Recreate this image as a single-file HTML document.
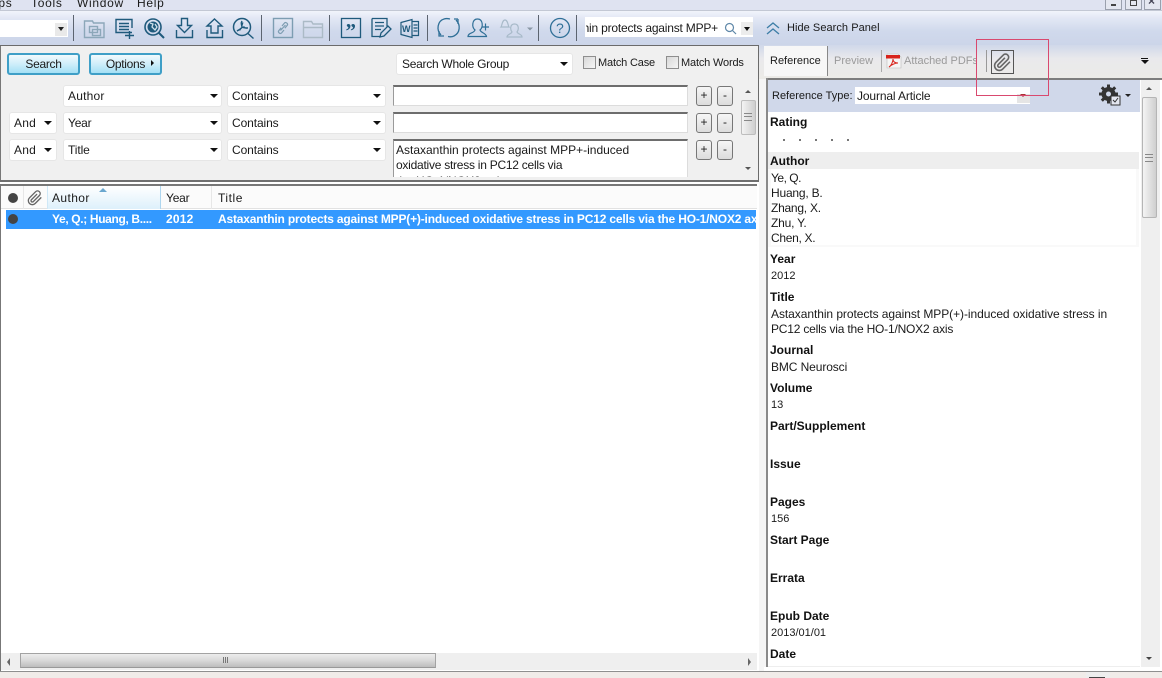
<!DOCTYPE html>
<html><head><meta charset="utf-8"><style>
html,body{margin:0;padding:0}
body{width:1162px;height:678px;position:relative;overflow:hidden;background:#fff;font-family:"Liberation Sans",sans-serif;font-size:12px;color:#1a1a1a}
.a{position:absolute}
.t{position:absolute;white-space:nowrap;line-height:15px;letter-spacing:-.2px}
.s{font-size:11px;letter-spacing:0}
.b{font-weight:bold;letter-spacing:0;color:#111}
.dd{position:absolute;height:20px;background:#fff;border-radius:2px;box-shadow:0 0 0 1px #e6e6e6}
.ar{position:absolute;width:0;height:0;border-left:4px solid transparent;border-right:4px solid transparent;border-top:4px solid #111}
.inp{position:absolute;background:#fff;border:1px solid #dcdcdc;border-top:2px solid #6d6d6d;border-left:1px solid #9a9a9a;box-sizing:border-box}
.pm{position:absolute;width:14px;height:18px;border:1px solid #777;border-radius:3px;background:linear-gradient(#f6f6f6,#dcdcdc);text-align:center;line-height:17px;font-size:12px;color:#222}
.btn{position:absolute;height:18px;top:53px;border:2px solid #3f9fc7;border-radius:3px;background:linear-gradient(#f2fafd 0%,#cfeefa 50%,#a5e0f5 100%);text-align:center;line-height:18px;letter-spacing:-.3px}
.sep{position:absolute;width:1px;background:#5c6470}
.cb{position:absolute;width:11px;height:11px;border:1px solid #8e8e8e;background:linear-gradient(135deg,#d8d8d8,#f6f6f6)}
svg{position:absolute;overflow:visible}
</style></head><body>

<!-- top chrome -->
<div class="a" style="left:0;top:0;width:1162px;height:10px;background:#dfe3f1"></div>
<div class="a" style="left:0;top:10px;width:1162px;height:1px;background:#c3c8d4"></div>
<div class="a" style="left:0;top:11px;width:1162px;height:34px;background:linear-gradient(#f1f4fb 0%,#e3e8f5 20%,#d0d9ec 60%,#ccd5e9 100%)"></div>
<div class="t" style="left:-5px;top:-4px;letter-spacing:.7px">ips</div>
<div class="t" style="left:31px;top:-4px;letter-spacing:.7px">Tools</div>
<div class="t" style="left:77px;top:-4px;letter-spacing:.7px">Window</div>
<div class="t" style="left:137px;top:-4px;letter-spacing:.7px">Help</div>
<!-- window buttons -->
<div class="a" style="left:1105px;top:-4px;width:15px;height:12px;border:1px solid #9aa0ad;background:#e4e7f0"></div>
<div class="a" style="left:1125px;top:-4px;width:15px;height:12px;border:1px solid #9aa0ad;background:#e4e7f0"></div>
<div class="a" style="left:1144px;top:-4px;width:15px;height:12px;border:1px solid #9aa0ad;background:#e4e7f0"></div>
<div class="a" style="left:1111px;top:4px;width:5px;height:2px;background:#444"></div>
<div class="a" style="left:1130px;top:0;width:5px;height:4px;border:1px solid #444"></div>
<div class="t" style="left:1148px;top:-6px;font-weight:bold;color:#445">×</div>

<!-- group combobox -->
<div class="a" style="left:0;top:20px;width:68px;height:17px;background:#fff"></div>
<div class="a" style="left:55px;top:23px;width:12px;height:13px;background:#e9e9e9"></div>
<div class="ar" style="left:58px;top:27px;border-left-width:3px;border-right-width:3px;border-top-color:#222"></div>

<div class="sep" style="left:73px;top:15px;height:26px"></div>
<div class="sep" style="left:261px;top:15px;height:26px"></div>
<div class="sep" style="left:329px;top:15px;height:26px"></div>
<div class="sep" style="left:427px;top:15px;height:26px"></div>
<div class="sep" style="left:538px;top:15px;height:26px"></div>
<div class="sep" style="left:576px;top:15px;height:26px"></div>

<svg class="a" style="left:0;top:0" width="760" height="46" viewBox="0 0 760 46" fill="none" stroke="#1f5a7c" stroke-width="1.4">
 <!-- copy to group -->
 <g stroke="#8ca7b9"><path d="M84.5 37.5V21h8l1 2h10.500v14.500z"/><rect x="89.500" y="26.500" width="8" height="6"/><rect x="92.500" y="29.500" width="8" height="6"/></g>
 <!-- new ref -->
 <path d="M132 32.500H116V19.500H132V28M119 23.500h10M119 26.500h10M119 29.500h10M125 35.500h9M129.500 31v8" />
 <!-- online search globe -->
 <circle cx="153" cy="27" r="8" stroke-width="1.6"/><circle cx="153" cy="27" r="5.500" fill="#1f5a7c" stroke="none"/><path d="M150 23l3 1-1 3 3 3 2-3-2-3" stroke="#cfe0ea" stroke-width="1.300"/><path d="M159 33l5 5" stroke-width="2"/>
 <!-- import -->
 <path d="M181.500 18.500h6v7h4l-7 7-7-7h4zM176.500 30v7.500h16V30"/>
 <!-- export -->
 <path d="M214.500 19l7.500 7h-4v7h-7v-7h-4zM207 30v7.500h15.500V30"/>
 <!-- find pdf -->
 <circle cx="242" cy="27" r="8.500" stroke-width="1.500"/><path d="M242 21c-1.500 3 0 5 0 6s-3 3-5 4M242 27c1 1 4 1 6 1M248 33.500l5.500 5" /><path d="M240.500 22.500h3l-1.500 5zM236.500 30.500l5-3-1 3zM247 29l-5-1.500 2-1.500z" fill="#1f5a7c" stroke="none"/>
 <!-- link -->
 <g stroke="#7d9db2"><rect x="273.500" y="18.500" width="19" height="19"/><path d="M280.500 30.500l5-5.500M282 26l2.500-3c1.300-1.400 4 .8 2.700 2.400l-2.400 2.800M284 30l-2.500 3c-1.400 1.400-4-.8-2.700-2.400l2.400-2.800" stroke-width="1.200"/></g>
 <!-- folder -->
 <g stroke="#abbac6"><path d="M303.500 37.500V21.500h8l1.500 2.500h9.500v13.500zM303.500 27.500h19"/></g>
 <!-- quote -->
 <rect x="341.500" y="18.500" width="19" height="19" stroke-width="1.300"/>
 <text x="345.500" y="38" font-family="Liberation Serif" font-size="21" font-weight="bold" fill="#1f5a7c" stroke="none">”</text>
 <!-- edit -->
 <path d="M372 18.500h15v8M372 18.500v18h8M375 22.500h9M375 26h9M375 29.500h6M380 37l1-4 7-7 3 3-7 7z" stroke-width="1.300"/>
 <!-- word -->
 <path d="M401 22.500l11-3v18l-11-3zM412 21.500h6.500v14H412M413.500 25h4M413.500 28h4M413.500 31h4" stroke-width="1.200"/>
 <text x="402" y="32" font-family="Liberation Sans" font-size="9" font-weight="bold" fill="#1f5a7c" stroke="none">W</text>
 <!-- sync -->
 <g stroke="#2f6f97" stroke-width="1.300"><path d="M441 35c-5-5-3.500-14 3-16 2-.7 4-.5 6 0M456 20c5 5 4 13-2 16-2 1-4 1-6 .5"/><path d="M439 31v5h5M458 19v5M458 19h-4" /></g>
 <!-- add user -->
 <g stroke="#2f6f97" stroke-width="1.200"><path d="M468 36.500c0-4 6-3 7-6.500-3.500-3-3-11 2.500-11 5.500 0 6 8 2.500 11 1 3 6 3 6.500 6.500zM482 27h7M485.500 23.500v7"/></g>
 <!-- notify user -->
 <g stroke="#a8bac9" stroke-width="1.200"><path d="M507 37c0-3 4-2.500 5-5-2-2.500-2-8 2.500-8s4.500 5.500 2.500 8c1 2.500 5 2 5 5zM501 27c1-1 1-7 4-7s3 6 4 7z"/></g>
 <path d="M527 27.500h6l-3 3z" fill="#8a97a5" stroke="none"/>
 <!-- help -->
 <circle cx="560" cy="28" r="9.500" stroke="#2f6f97" stroke-width="1.300"/>
 <text x="556" y="33" font-family="Liberation Sans" font-size="14" fill="#2f6f97" stroke="none">?</text>
</svg>

<!-- toolbar search -->
<div class="a" style="left:585px;top:17px;width:168px;height:20px;background:#fff"></div>
<div class="a" style="left:586px;top:20.500px;width:132px;height:15px;overflow:hidden"><span class="t" style="right:0;top:0;letter-spacing:-.2px">Astaxanthin protects against MPP+</span></div>
<svg class="a" style="left:724px;top:22px" width="14" height="14" fill="none" stroke="#5e87a8" stroke-width="1.200"><circle cx="5.500" cy="5.500" r="4"/><path d="M8.500 8.500l3.500 3.500"/></svg>
<div class="a" style="left:741px;top:22px;width:12px;height:13px;background:#ececec"></div>
<div class="ar" style="left:744px;top:27px;border-left-width:3px;border-right-width:3px"></div>
<svg class="a" style="left:766px;top:22px" width="15" height="14" fill="none" stroke="#3d7ea6" stroke-width="1.300"><path d="M1 6l6-5 6 5M1 12l6-5 6 5"/></svg>
<div class="t s" style="left:787px;top:21px;letter-spacing:.05px">Hide Search Panel</div>

<!-- search panel -->
<div class="a" style="left:0;top:45px;width:759px;height:137px;background:#f0f0f0;border-top:1px solid #6b6b6b;border-right:1px solid #6b6b6b;border-bottom:2px solid #6f6f6f;box-sizing:border-box"></div>
<div class="a" style="left:0;top:46px;width:1px;height:134px;background:#777"></div>
<div class="btn" style="left:7px;width:69px">Search</div>
<div class="btn" style="left:89px;width:69px">Options</div>
<div class="a" style="left:151px;top:60px;width:0;height:0;border-top:3px solid transparent;border-bottom:3px solid transparent;border-left:3px solid #111"></div>

<div class="dd" style="left:397px;top:54px;width:175px"></div>
<div class="t" style="left:402px;top:56.500px;letter-spacing:-.28px">Search Whole Group</div>
<div class="ar" style="left:560px;top:62px"></div>
<div class="cb" style="left:583px;top:56px"></div>
<div class="t s" style="left:598px;top:55.500px;letter-spacing:-.17px">Match Case</div>
<div class="cb" style="left:666px;top:56px"></div>
<div class="t s" style="left:681px;top:55.500px;letter-spacing:-.17px">Match Words</div>

<!-- rows -->
<div class="dd" style="left:64px;top:86px;width:157px"></div><div class="t" style="left:68px;top:88.500px;letter-spacing:.2px">Author</div><div class="ar" style="left:210px;top:94px"></div>
<div class="dd" style="left:228px;top:86px;width:157px"></div><div class="t" style="left:232px;top:88.500px;letter-spacing:-.1px">Contains</div><div class="ar" style="left:373px;top:94px"></div>
<div class="inp" style="left:393px;top:85px;width:295px;height:21px"></div>
<div class="pm" style="left:696px;top:86px">+</div><div class="pm" style="left:717px;top:86px">-</div>

<div class="dd" style="left:10px;top:113px;width:46px"></div><div class="t" style="left:14px;top:115.500px;letter-spacing:.2px">And</div><div class="ar" style="left:44px;top:121px"></div>
<div class="dd" style="left:64px;top:113px;width:157px"></div><div class="t" style="left:68px;top:115.500px;letter-spacing:-.2px">Year</div><div class="ar" style="left:210px;top:121px"></div>
<div class="dd" style="left:228px;top:113px;width:157px"></div><div class="t" style="left:232px;top:115.500px;letter-spacing:-.1px">Contains</div><div class="ar" style="left:373px;top:121px"></div>
<div class="inp" style="left:393px;top:112px;width:295px;height:21px"></div>
<div class="pm" style="left:696px;top:113px">+</div><div class="pm" style="left:717px;top:113px">-</div>

<div class="dd" style="left:10px;top:140px;width:46px"></div><div class="t" style="left:14px;top:142.500px;letter-spacing:.2px">And</div><div class="ar" style="left:44px;top:148px"></div>
<div class="dd" style="left:64px;top:140px;width:157px"></div><div class="t" style="left:68px;top:142.500px;letter-spacing:-.1px">Title</div><div class="ar" style="left:210px;top:148px"></div>
<div class="dd" style="left:228px;top:140px;width:157px"></div><div class="t" style="left:232px;top:142.500px;letter-spacing:-.1px">Contains</div><div class="ar" style="left:373px;top:148px"></div>
<div class="inp" style="left:393px;top:139px;width:295px;height:38px;overflow:hidden;border-bottom:0">
 <div class="t" style="left:2px;top:2px;letter-spacing:0">Astaxanthin protects against MPP+-induced</div>
 <div class="t" style="left:2px;top:17px;letter-spacing:-.25px">oxidative stress in PC12 cells via</div>
 <div class="t" style="left:2px;top:33px;letter-spacing:0">the HO-1/NOX2 axis</div>
</div>
<div class="pm" style="left:696px;top:140px">+</div><div class="pm" style="left:717px;top:140px">-</div>

<!-- search scrollbar -->
<div class="a" style="left:740px;top:86px;width:16px;height:92px;background:#f0f0f0"></div>
<div class="a" style="left:745px;top:90px;width:0;height:0;border-left:3px solid transparent;border-right:3px solid transparent;border-bottom:3px solid #555"></div>
<div class="a" style="left:741px;top:100px;width:13px;height:33px;background:linear-gradient(90deg,#f3f3f3,#cfcfcf);border:1px solid #bdbdbd;border-radius:2px"></div>
<div class="a" style="left:744px;top:113px;width:8px;height:6px;border-top:1px solid #888;border-bottom:1px solid #888"></div>
<div class="a" style="left:744px;top:116px;width:8px;height:1px;background:#888"></div>
<div class="a" style="left:745px;top:167px;width:0;height:0;border-left:3px solid transparent;border-right:3px solid transparent;border-top:3px solid #555"></div>

<!-- table -->
<div class="a" style="left:0;top:184px;width:757px;height:2px;background:#777"></div>
<div class="a" style="left:0;top:184px;width:1px;height:487px;background:#777"></div>
<div class="a" style="left:1px;top:186px;width:756px;height:23px;background:#fbfbfb"></div>
<div class="a" style="left:1px;top:208px;width:756px;height:1px;background:#e2e2e2"></div>
<div class="a" style="left:47px;top:186px;width:112px;height:23px;background:linear-gradient(#ffffff,#ddf0fb);border-right:1px solid #aed6ef;border-left:1px solid #cfe8f7"></div>
<div class="a" style="left:23px;top:186px;width:1px;height:23px;background:#e7e7e7"></div>
<div class="a" style="left:211px;top:186px;width:1px;height:23px;background:#e7e7e7"></div>
<div class="a" style="left:8px;top:193px;width:10px;height:10px;border-radius:50%;background:#444"></div>
<svg class="a" style="left:27px;top:190px" width="16" height="16" viewBox="0 0 24 24" fill="none" stroke="#666" stroke-width="2"><path d="M21.440 11.050l-9.190 9.190a6 6 0 0 1-8.490-8.490l9.190-9.190a4 4 0 0 1 5.660 5.660l-9.200 9.190a2 2 0 0 1-2.830-2.830l8.490-8.480"/></svg>
<div class="a" style="left:99px;top:188px;width:0;height:0;border-left:4px solid transparent;border-right:4px solid transparent;border-bottom:4px solid #6aa7cf"></div>
<div class="t" style="left:52px;top:190.500px;letter-spacing:.4px">Author</div>
<div class="t" style="left:166px;top:190.500px;letter-spacing:-.2px">Year</div>
<div class="t" style="left:218px;top:190.500px;letter-spacing:.55px">Title</div>

<div class="a" style="left:6px;top:210px;width:750px;height:19px;background:#3399ff;overflow:hidden">
 <div class="t b" style="left:46px;top:2px;color:#fff;letter-spacing:-.35px">Ye, Q.; Huang, B....</div>
 <div class="t b" style="left:160px;top:2px;color:#fff;letter-spacing:.2px">2012</div>
 <div class="t b" style="left:212px;top:2px;color:#fff;letter-spacing:-.18px">Astaxanthin protects against MPP(+)-induced oxidative stress in PC12 cells via the HO-1/NOX2 axis</div>
</div>
<div class="a" style="left:8px;top:214px;width:10px;height:10px;border-radius:50%;background:#444"></div>

<!-- h scrollbar -->
<div class="a" style="left:1px;top:653px;width:756px;height:17px;background:#efefef"></div>
<div class="a" style="left:7px;top:658px;width:0;height:0;border-top:4px solid transparent;border-bottom:4px solid transparent;border-right:3px solid #666"></div>
<div class="a" style="left:748px;top:658px;width:0;height:0;border-top:4px solid transparent;border-bottom:4px solid transparent;border-left:3px solid #666"></div>
<div class="a" style="left:20px;top:653px;width:414px;height:13px;background:linear-gradient(#ececec,#d9d9d9 50%,#bdbdbd);border:1px solid #a3a3a3;border-bottom-color:#999"></div>
<div class="a" style="left:223px;top:657px;width:1px;height:6px;background:#777;box-shadow:2px 0 0 #777,4px 0 0 #777"></div>
<div class="a" style="left:0;top:671px;width:1162px;height:1px;background:#8f8f8f"></div>
<div class="a" style="left:0;top:672px;width:1162px;height:6px;background:#f1ece9"></div>
<div class="a" style="left:1086px;top:672px;width:24px;height:6px;background:#eee"></div>
<div class="a" style="left:1089px;top:677px;width:16px;height:1px;background:#444"></div>

<!-- right side -->
<div class="a" style="left:759px;top:45px;width:403px;height:34px;background:linear-gradient(#d0d8ea 0%,#e9e9ec 40%,#ecebe7 100%)"></div>
<div class="a" style="left:759px;top:79px;width:7px;height:592px;background:#f5f5f5"></div>
<div class="a" style="left:764px;top:46px;width:63px;height:30px;background:#f7f7f7;border-right:1px solid #888"></div>
<div class="t s" style="left:770px;top:54px">Reference</div>
<div class="t s" style="left:834px;top:54px;color:#9a9a9a">Preview</div>
<div class="a" style="left:881px;top:50px;width:1px;height:22px;background:#aaa"></div>
<svg class="a" style="left:885px;top:53px" width="18" height="16" fill="none"><path d="M2 1h11l3 3v11H2z" fill="#f5f5f5" stroke="#bbb" stroke-width=".6"/><path d="M1 2h14v3.500H1z" fill="#d8231c"/><path d="M4 14c2-1 4-5 4-8 0 3 2 4 5 4-3 0-7 2-9 4z" stroke="#d8231c" stroke-width="1"/></svg>
<div class="t s" style="left:904px;top:54px;color:#9a9a9a;width:73px;overflow:hidden">Attached PDFs</div>
<div class="a" style="left:986px;top:50px;width:1px;height:22px;background:#999"></div>
<div class="a" style="left:991px;top:50px;width:23px;height:24px;border:1px solid #555;box-sizing:border-box"></div>
<svg class="a" style="left:993px;top:53px" width="19" height="19" viewBox="0 0 24 24" fill="none" stroke="#666" stroke-width="2"><path d="M21.440 11.050l-9.190 9.190a6 6 0 0 1-8.490-8.490l9.190-9.190a4 4 0 0 1 5.660 5.660l-9.200 9.190a2 2 0 0 1-2.830-2.830l8.490-8.480"/></svg>
<div class="a" style="left:1141px;top:58px;width:7px;height:1px;background:#111"></div>
<div class="ar" style="left:1141px;top:60px"></div>

<div class="a" style="left:766px;top:78px;width:396px;height:2px;background:#7d7d7d"></div>
<div class="a" style="left:766px;top:78px;width:2px;height:593px;background:#8a8a8a"></div>
<div class="a" style="left:768px;top:80px;width:372px;height:32px;background:#d0d8ea"></div>
<div class="t s" style="left:772px;top:88.500px">Reference Type:</div>
<div class="a" style="left:855px;top:87px;width:175px;height:17px;background:#fff"></div>
<div class="t" style="left:857px;top:88.500px;letter-spacing:-.13px">Journal Article</div>
<div class="a" style="left:1017px;top:94px;width:13px;height:9px;background:#e5e5e5"></div>
<div class="ar" style="left:1020px;top:94px;border-left-width:3px;border-right-width:3px;border-top-width:3px;border-top-color:#a33"></div>

<svg class="a" style="left:1099px;top:84px" width="36" height="24" fill="none">
 <circle cx="9.500" cy="10" r="5" stroke="#333" stroke-width="4"/>
 <path d="M9.500 0.500v19M0 10h19M2.800 3.300l13.400 13.400M16.200 3.300L2.800 16.700" stroke="#333" stroke-width="3"/>
 <circle cx="9.500" cy="10" r="2.500" fill="#d0d8ea"/>
 <rect x="12" y="12" width="9" height="9" fill="#e4e7f0" stroke="#333"/><path d="M14 16l2 2 3-4" stroke="#333"/>
 <path d="M26 10h6l-3 3z" fill="#222"/>
</svg>

<!-- content -->
<div class="t b" style="left:770px;top:114.500px">Rating</div>
<div class="a" style="left:783px;top:139px;width:2px;height:2px;background:#777;box-shadow:16px 0 0 #777,32px 0 0 #777,48px 0 0 #777,64px 0 0 #777"></div>
<div class="a" style="left:768px;top:152px;width:371px;height:95px;background:#f9f9f9"></div>
<div class="a" style="left:768px;top:152px;width:371px;height:17px;background:#eeeeee"></div>
<div class="a" style="left:771px;top:169px;width:365px;height:76px;background:#fff"></div>
<div class="t b" style="left:770px;top:153.500px">Author</div>
<div class="t" style="left:771px;top:170.500px;letter-spacing:-.5px">Ye, Q.</div>
<div class="t" style="left:771px;top:185.500px">Huang, B.</div>
<div class="t" style="left:771px;top:200.500px;letter-spacing:-.25px">Zhang, X.</div>
<div class="t" style="left:771px;top:215.500px">Zhu, Y.</div>
<div class="t" style="left:771px;top:230.500px;letter-spacing:-.3px">Chen, X.</div>
<div class="t b" style="left:770px;top:251.500px">Year</div>
<div class="t s" style="left:771px;top:268.500px">2012</div>
<div class="t b" style="left:770px;top:289.500px">Title</div>
<div class="t" style="left:771px;top:306.500px;letter-spacing:-.06px">Astaxanthin protects against MPP(+)-induced oxidative stress in</div>
<div class="t" style="left:771px;top:321.500px">PC12 cells via the HO-1/NOX2 axis</div>
<div class="t b" style="left:770px;top:342.500px">Journal</div>
<div class="t" style="left:771px;top:359.500px;letter-spacing:-.1px">BMC Neurosci</div>
<div class="t b" style="left:770px;top:380.500px">Volume</div>
<div class="t s" style="left:771px;top:397.500px">13</div>
<div class="t b" style="left:770px;top:418.500px">Part/Supplement</div>
<div class="t b" style="left:770px;top:456.500px">Issue</div>
<div class="t b" style="left:770px;top:494.500px">Pages</div>
<div class="t s" style="left:771px;top:511.500px">156</div>
<div class="t b" style="left:770px;top:532.500px">Start Page</div>
<div class="t b" style="left:770px;top:570.500px">Errata</div>
<div class="t b" style="left:770px;top:608.500px">Epub Date</div>
<div class="t s" style="left:771px;top:625.500px">2013/01/01</div>
<div class="t b" style="left:770px;top:646.500px">Date</div>
<div class="a" style="left:768px;top:666px;width:372px;height:1px;background:#eee"></div>
<div class="a" style="left:764px;top:667px;width:398px;height:4px;background:#fff"></div>
<div class="a" style="left:1140px;top:667px;width:20px;height:3px;background:#fff"></div>

<!-- right scrollbar -->
<div class="a" style="left:1141px;top:80px;width:19px;height:587px;background:#efefef"></div>
<div class="a" style="left:1146px;top:87px;width:0;height:0;border-left:3px solid transparent;border-right:3px solid transparent;border-bottom:3px solid #555"></div>
<div class="a" style="left:1142px;top:97px;width:13px;height:119px;background:linear-gradient(90deg,#f4f4f4,#cfcfcf);border:1px solid #b5b5b5;border-radius:2px"></div>
<div class="a" style="left:1145px;top:154px;width:8px;height:6px;border-top:1px solid #888;border-bottom:1px solid #888"></div>
<div class="a" style="left:1145px;top:157px;width:8px;height:1px;background:#888"></div>
<div class="a" style="left:1146px;top:657px;width:0;height:0;border-left:3px solid transparent;border-right:3px solid transparent;border-top:3px solid #444"></div>

<!-- red annotation -->
<div class="a" style="left:976px;top:39px;width:73px;height:57px;border:1px solid #d9496f;box-sizing:border-box"></div>
</body></html>
